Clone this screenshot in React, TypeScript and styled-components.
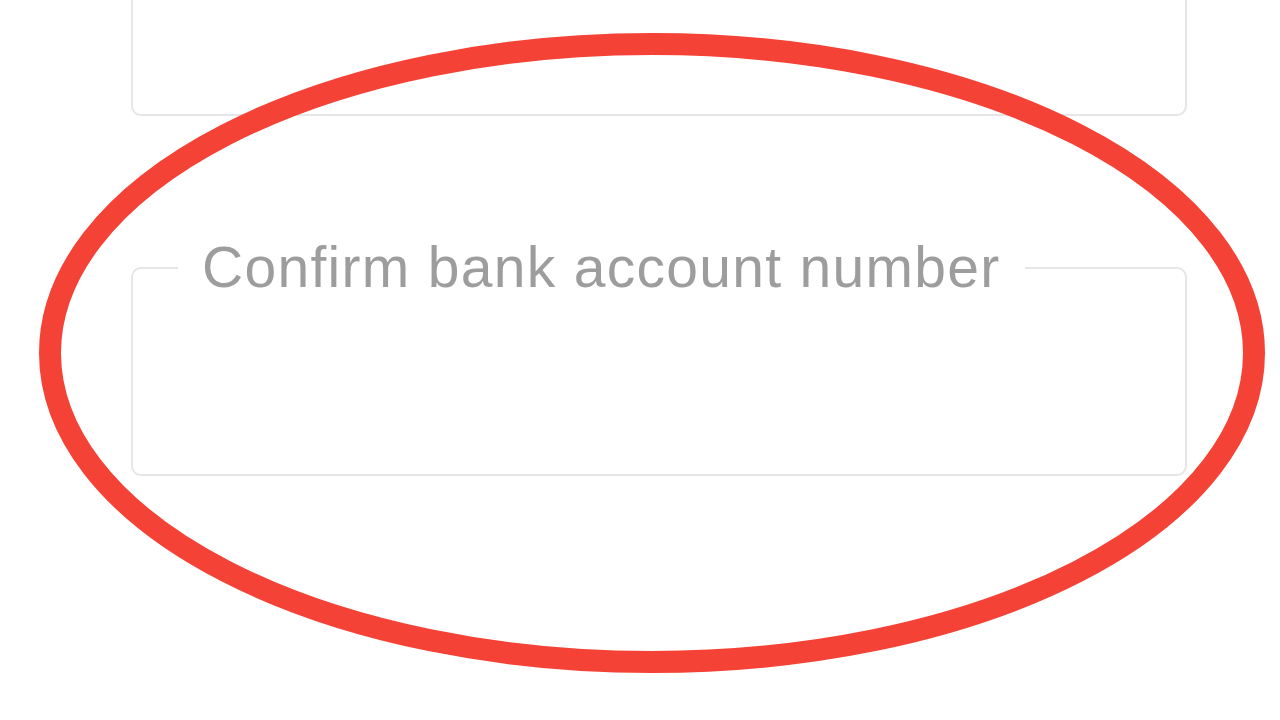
import styled, { createGlobalStyle } from "styled-components"

const GlobalStyle = createGlobalStyle`
    html, body {
        margin: 0;
        padding: 0;
        background: #ffffff;
        overflow: hidden;
    }
    body {
        font-family: "Liberation Sans", Arial, sans-serif;
    }
`

const palette = {
    border: "#e6e6e6",
    label: "#9d9d9d",
    marker: "#f44336",
}

const Page = styled.div`
    position: relative;
    width: 1280px;
    height: 720px;
    overflow: hidden;
`

const Form = styled.div`
    display: flex;
    flex-direction: column;
    gap: 123px;
    width: 1056px;
    padding-left: 131px;
`

const FieldBox = styled.div`
    box-sizing: border-box;
    height: 181px;
    margin-top: -65px;
    border: 2px solid ${palette.border};
    border-radius: 10px;
`

const FieldSet = styled.fieldset`
    margin: 0;
    padding: 0;
    border: 2px solid ${palette.border};
    border-radius: 10px;
`

const Legend = styled.legend`
    margin-left: 45px;
    padding: 0 24px;
    font-size: 57px;
    line-height: 1;
    letter-spacing: 1.3px;
    color: ${palette.label};
`

const FieldInput = styled.div<{ tall: number }>`
    height: ${({ tall }) => tall}px;
`

const Marker = styled.svg`
    position: absolute;
    left: 0;
    top: 0;
    pointer-events: none;
`

export default function App() {
    return (
        <Page>
            <GlobalStyle />
            <Form>
                <FieldBox />
                <FieldSet>
                    <Legend>Confirm bank account number</Legend>
                    <FieldInput tall={178} />
                </FieldSet>
            </Form>
            <Marker width="1280" height="720" viewBox="0 0 1280 720">
                <ellipse cx="652" cy="353" rx="602" ry="309" fill="none" stroke={palette.marker} strokeWidth="22" />
            </Marker>
        </Page>
    )
}
